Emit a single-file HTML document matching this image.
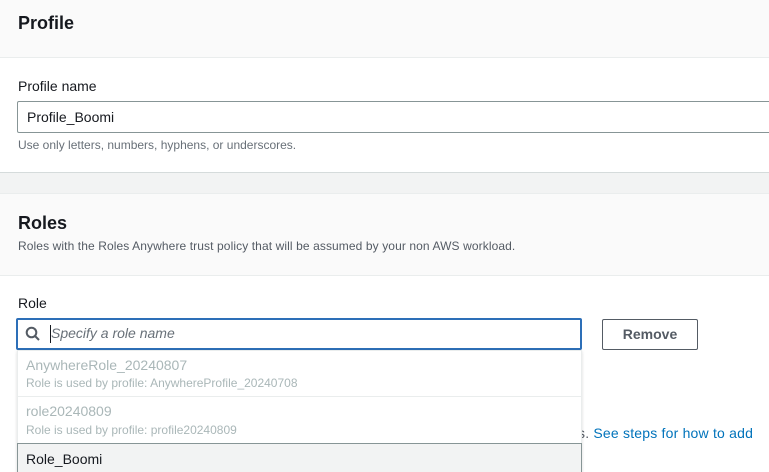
<!DOCTYPE html>
<html><head><style>
*{margin:0;padding:0;box-sizing:border-box}
html,body{width:769px;height:472px;overflow:hidden}
body{background:#fff;font-family:"Liberation Sans",sans-serif;position:relative;color:#16191f}
.a{position:absolute}
</style></head><body>
<div class="a" style="left:0;top:0;width:769px;height:58px;background:#fafafa;border-bottom:1px solid #eaeded"></div>
<div class="a" style="left:18px;top:13px;font-size:18px;font-weight:bold">Profile</div>
<div class="a" style="left:18px;top:78px;font-size:14px">Profile name</div>
<div class="a" style="left:17px;top:101px;width:760px;height:32px;border:1px solid #879596;border-radius:2px;font-size:14px;padding:7px 9px">Profile_Boomi</div>
<div class="a" style="left:18px;top:138px;font-size:12px;color:#687078">Use only letters, numbers, hyphens, or underscores.</div>
<div class="a" style="left:0;top:172px;width:769px;height:22px;background:#f2f3f3;border-top:1px solid #d5dbdb;border-bottom:1px solid #eaeded"></div>
<div class="a" style="left:0;top:194px;width:769px;height:82px;background:#fafafa;border-bottom:1px solid #eaeded"></div>
<div class="a" style="left:18px;top:213px;font-size:18px;font-weight:bold">Roles</div>
<div class="a" style="left:18px;top:239px;font-size:12px;color:#545b64;letter-spacing:0.1px">Roles with the Roles Anywhere trust policy that will be assumed by your non AWS workload.</div>
<div class="a" style="left:18px;top:295px;font-size:14px">Role</div>
<div class="a" style="left:16px;top:318px;width:566px;height:32px;border:2px solid #2d6fb8;border-radius:2px"></div>
<svg class="a" style="left:25px;top:326px" width="16" height="16" viewBox="0 0 16 16"><circle cx="6.5" cy="6.5" r="4.8" fill="none" stroke="#545b64" stroke-width="2"/><path d="M10 10l4 4" stroke="#545b64" stroke-width="2"/></svg>
<div class="a" style="left:50px;top:325px;width:1px;height:18px;background:#16191f"></div>
<div class="a" style="left:51px;top:325px;font-size:14px;font-style:italic;color:#687078">Specify a role name</div>
<div class="a" style="left:602px;top:319px;width:96px;height:31px;border:1px solid #545b64;border-radius:2px;font-size:14px;font-weight:bold;color:#545b64;text-align:center;line-height:29px">Remove</div>
<div class="a" style="left:578px;top:425px;font-size:14px;color:#545b64;letter-spacing:0.2px">s. <span style="color:#0073bb">See steps for how to add</span></div>
<div class="a" style="left:17px;top:350px;width:565px;height:130px;background:#fff;border:1px solid #eaeded;box-shadow:0 1px 3px rgba(0,0,0,.15)"></div>
<div class="a" style="left:18px;top:396px;width:563px;height:1px;background:#eaeded"></div>
<div class="a" style="left:26px;top:357px;font-size:14px;color:#aab7b8">AnywhereRole_20240807</div>
<div class="a" style="left:26px;top:376px;font-size:12px;color:#aab7b8">Role is used by profile: AnywhereProfile_20240708</div>
<div class="a" style="left:26px;top:403px;font-size:14px;color:#aab7b8">role20240809</div>
<div class="a" style="left:26px;top:423px;font-size:12px;color:#aab7b8">Role is used by profile: profile20240809</div>
<div class="a" style="left:17px;top:443px;width:565px;height:40px;background:#f2f3f3;border:1px solid #879596"></div>
<div class="a" style="left:26px;top:451px;font-size:14px">Role_Boomi</div>
</body></html>
